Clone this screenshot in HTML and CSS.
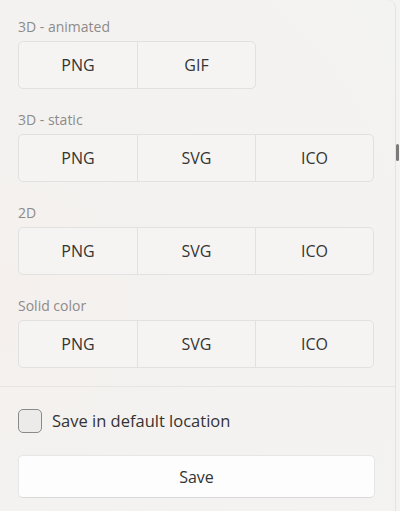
FILE: index.html
```html
<!DOCTYPE html>
<html lang="en">
<head>
  <meta charset="UTF-8">
  <meta name="viewport" content="width=device-width, initial-scale=1.0">
  <title>Export</title>
  <link rel="stylesheet" href="styles.css">
</head>
<body>
  <div class="panel">
    <div class="section">
      <div class="label">3D - animated</div>
      <div class="group">
        <button class="seg">PNG</button>
        <button class="seg">GIF</button>
      </div>
    </div>
    <div class="section">
      <div class="label">3D - static</div>
      <div class="group">
        <button class="seg">PNG</button>
        <button class="seg">SVG</button>
        <button class="seg">ICO</button>
      </div>
    </div>
    <div class="section">
      <div class="label">2D</div>
      <div class="group">
        <button class="seg">PNG</button>
        <button class="seg">SVG</button>
        <button class="seg">ICO</button>
      </div>
    </div>
    <div class="section">
      <div class="label">Solid color</div>
      <div class="group">
        <button class="seg">PNG</button>
        <button class="seg">SVG</button>
        <button class="seg">ICO</button>
      </div>
    </div>
    <div class="footer">
      <label class="check">
        <span class="box"></span>
        <span>Save in default location</span>
      </label>
      <button class="save">Save</button>
    </div>
  </div>
  <div class="thumb"></div>
</body>
</html>
```
FILE: styles.css
```css
body {
  margin: 0;
  height: 511px;
  overflow: hidden;
  font-family: "Open Sans", "Noto Sans", sans-serif;
  background: radial-gradient(circle at 0 60%, #f5f0ed 0, #f3f2f0 40%, #f3f3f2 100%);
}
.panel {
  width: 396px;
  height: 511px;
  box-sizing: border-box;
  border-right: 1px solid #e4e3e1;
  border-top-right-radius: 8px;
  padding-top: 17px;
}
.section {
  padding: 0 18px;
  margin-bottom: 21px;
}
.label {
  font-size: 14px;
  line-height: 20px;
  color: #8d8b89;
  margin-bottom: 4px;
}
.group {
  display: flex;
  width: fit-content;
  height: 48px;
  box-sizing: border-box;
  border: 1px solid #e2e1df;
  border-radius: 5px;
  background: #f5f4f3;
  overflow: hidden;
}
.seg {
  width: 118px;
  border: none;
  background: transparent;
  font-family: inherit;
  font-size: 16px;
  color: #343434;
  padding: 0;
}
.seg + .seg {
  border-left: 1px solid #e2e1df;
}
.footer {
  border-top: 1px solid #e6e5e3;
  margin-top: -3px;
  padding: 22px 18px 0;
}
.check {
  display: flex;
  align-items: center;
  gap: 10px;
  font-size: 16.5px;
  line-height: 24px;
  color: #333;
}
.box {
  width: 22px;
  height: 22px;
  border: 1px solid #8a8a8a;
  border-radius: 5px;
  background: #ecebea;
}
.save {
  display: block;
  width: 357px;
  height: 43px;
  margin-top: 22px;
  background: #fdfdfd;
  border: 1px solid #e6e6e6;
  border-bottom-color: #d9d9d9;
  border-radius: 5px;
  font-family: inherit;
  font-size: 16px;
  color: #333;
}
.thumb {
  position: absolute;
  left: 396px;
  top: 144px;
  width: 3px;
  height: 17px;
  border-radius: 2px;
  background: #7a7a7a;
}
```
